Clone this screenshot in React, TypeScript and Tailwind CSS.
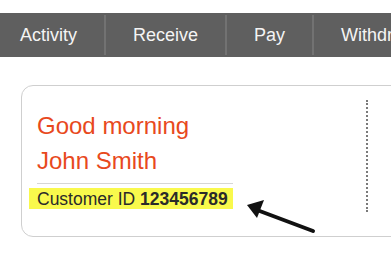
import React from 'react';

const tabs = ['Activity', 'Receive', 'Pay', 'Withdraw'];

function NavBar() {
  return (
    <nav className="mt-[13px] flex h-[44px] w-max bg-[#5f5f5f] text-[18px] leading-none text-[#f4f4f4]">
      {tabs.map((tab, i) => (
        <React.Fragment key={tab}>
          {i > 0 && <div className="my-[2px] w-[2px] bg-[#727272]" />}
          <div className={`flex items-center ${i === 0 ? 'pl-[20px] pr-[27px]' : 'px-[27px]'}`}>{tab}</div>
        </React.Fragment>
      ))}
    </nav>
  );
}

function GreetingCard() {
  return (
    <div className="ml-[21px] mt-[28px] flex h-[152px] w-[420px] rounded-[12px] border-[1.5px] border-[#cfcfcf]">
      <div className="w-[344px] pl-[15px] pt-[22px]">
        <div className="text-[24px] leading-[35px] text-[#e8491d]">
          <div>Good morning</div>
          <div>John Smith</div>
        </div>
        <div className="mt-[5px] w-[196px] border-t border-[#d6d6d6]" />
        <div className="-ml-[8px] mt-[4px] h-[21px] w-[204px] bg-[#f9f94c] pl-[8px] pt-[2px] text-[17.5px] leading-[19px] text-[#2a2a2a]">
          Customer ID <b>123456789</b>
        </div>
      </div>
      <div className="mt-[14px] h-[112px] border-l-2 border-dotted border-[#7a7a7a]" />
    </div>
  );
}

export default function App() {
  return (
    <div
      className="relative h-[256px] w-[391px] overflow-hidden bg-white"
      style={{ fontFamily: '"Liberation Sans", Arial, sans-serif' }}
    >
      <NavBar />
      <GreetingCard />
      <svg className="pointer-events-none absolute left-0 top-0" width="391" height="256">
        <line x1="313" y1="231" x2="257" y2="210" stroke="#111" strokeWidth="4" strokeLinecap="round" />
        <polygon points="247,205 264,200 257,218" fill="#111" />
      </svg>
    </div>
  );
}
